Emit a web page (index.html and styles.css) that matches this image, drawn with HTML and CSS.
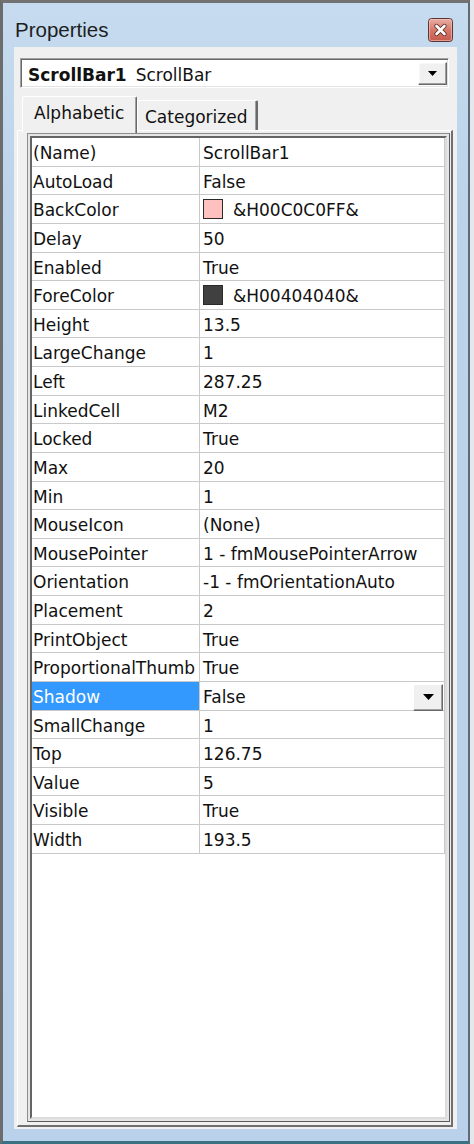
FILE: index.html
```html
<!DOCTYPE html>
<html>
<head>
<meta charset="utf-8">
<title>Properties</title>
<link rel="stylesheet" href="styles.css">
</head>
<body>
<div class="window">
  <div class="titlebar">
    <span class="title">Properties</span>
    <div class="close">
      <svg width="25" height="24" viewBox="0 0 25 24">
        <defs>
          <linearGradient id="cg" x1="0" y1="0" x2="0" y2="1">
            <stop offset="0" stop-color="#eab0a6"/>
            <stop offset="0.5" stop-color="#d7786b"/>
            <stop offset="1" stop-color="#c35a4d"/>
          </linearGradient>
        </defs>
        <rect x="0.5" y="0.5" width="24" height="23" rx="3" fill="url(#cg)" stroke="#5e3430"/>
        <rect x="1.5" y="1.5" width="22" height="21" rx="2" fill="none" stroke="#f3c8c0" stroke-opacity="0.6"/>
        <path d="M8.5 8 L16.5 16 M16.5 8 L8.5 16" stroke="#5a2d28" stroke-width="4.4" stroke-linecap="round"/>
        <path d="M8.5 8 L16.5 16 M16.5 8 L8.5 16" stroke="#ffffff" stroke-width="2.6" stroke-linecap="round"/>
      </svg>
    </div>
  </div>
  <div class="client">
    <div class="combo">
      <span class="combo-text"><b>ScrollBar1</b><span class="combo-type">ScrollBar</span></span>
      <span class="drop-btn"><svg width="9" height="5" viewBox="0 0 9 5"><polygon points="0,0 9,0 4.5,5" fill="#000"/></svg></span>
    </div>
    <div class="tabs">
      <div class="tab active">Alphabetic</div>
      <div class="tab inactive">Categorized</div>
    </div>
    <div class="page">
      <div class="grid-frame">
        <div class="grid">
          <div class="row"><div class="name">(Name)</div><div class="value">ScrollBar1</div></div>
          <div class="row"><div class="name">AutoLoad</div><div class="value">False</div></div>
          <div class="row"><div class="name">BackColor</div><div class="value"><span class="swatch swatch-pink"></span>&amp;H00C0C0FF&amp;</div></div>
          <div class="row"><div class="name">Delay</div><div class="value">50</div></div>
          <div class="row"><div class="name">Enabled</div><div class="value">True</div></div>
          <div class="row"><div class="name">ForeColor</div><div class="value"><span class="swatch swatch-dark"></span>&amp;H00404040&amp;</div></div>
          <div class="row"><div class="name">Height</div><div class="value">13.5</div></div>
          <div class="row"><div class="name">LargeChange</div><div class="value">1</div></div>
          <div class="row"><div class="name">Left</div><div class="value">287.25</div></div>
          <div class="row"><div class="name">LinkedCell</div><div class="value">M2</div></div>
          <div class="row"><div class="name">Locked</div><div class="value">True</div></div>
          <div class="row"><div class="name">Max</div><div class="value">20</div></div>
          <div class="row"><div class="name">Min</div><div class="value">1</div></div>
          <div class="row"><div class="name">MouseIcon</div><div class="value">(None)</div></div>
          <div class="row"><div class="name">MousePointer</div><div class="value">1 - fmMousePointerArrow</div></div>
          <div class="row"><div class="name">Orientation</div><div class="value">-1 - fmOrientationAuto</div></div>
          <div class="row"><div class="name">Placement</div><div class="value">2</div></div>
          <div class="row"><div class="name">PrintObject</div><div class="value">True</div></div>
          <div class="row"><div class="name">ProportionalThumb</div><div class="value">True</div></div>
          <div class="row selected"><div class="name">Shadow</div><div class="value">False<span class="cell-btn"><svg width="11" height="6" viewBox="0 0 11 6"><polygon points="0,0 11,0 5.5,6" fill="#000"/></svg></span></div></div>
          <div class="row"><div class="name">SmallChange</div><div class="value">1</div></div>
          <div class="row"><div class="name">Top</div><div class="value">126.75</div></div>
          <div class="row"><div class="name">Value</div><div class="value">5</div></div>
          <div class="row"><div class="name">Visible</div><div class="value">True</div></div>
          <div class="row"><div class="name">Width</div><div class="value">193.5</div></div>
        </div>
      </div>
    </div>
  </div>
</div>
</body>
</html>
```

FILE: styles.css
```css
html, body {
  margin: 0;
  padding: 0;
  background: #e4e8ec;
}

.window {
  width: 470px;
  height: 1144px;
  box-sizing: border-box;
  border-left: 3px solid #6c6c6c;
  border-top: 3px solid #727272;
  border-right: 2px solid #5f6b74;
  border-bottom: 3px solid #3b7283;
  background: linear-gradient(#c6dbef, #bcd3ea 200px, #b9d1ea);
  display: flex;
  flex-direction: column;
  font-family: "DejaVu Sans", sans-serif;
  font-size: 17px;
  color: #111;
}

.titlebar {
  height: 44px;
  box-sizing: border-box;
  padding: 15px 15px 0 12px;
  display: flex;
  justify-content: space-between;
  align-items: flex-start;
  flex: none;
}

.title {
  font-family: "Liberation Sans", Arial, sans-serif;
  font-size: 20.5px;
  line-height: 24px;
  color: #1e1e1e;
}

.close {
  width: 25px;
  height: 24px;
}

.close svg {
  display: block;
}

.client {
  flex: 1;
  margin: 0 11px 12px 11px;
  background: #f0f0f0;
  padding: 11px 4px 2px 3px;
  display: flex;
  flex-direction: column;
  min-height: 0;
}

.combo {
  flex: none;
  height: 30px;
  box-sizing: border-box;
  margin: 0 4px 0 3px;
  border: 1px solid;
  border-color: #a0a0a0 #ffffff #ffffff #a0a0a0;
  padding: 1px;
  background: #fff;
  box-shadow: inset 1px 1px 0 #696969, inset -1px -1px 0 #e3e3e3;
  display: flex;
  align-items: center;
}

.combo-text {
  flex: 1;
  padding-left: 6px;
  padding-top: 4px;
  white-space: nowrap;
}

.combo-text b {
  font-weight: bold;
}

.combo-type {
  margin-left: 9px;
}

.drop-btn {
  width: 29px;
  height: 23px;
  box-sizing: border-box;
  background: #f0f0f0;
  border: 1px solid;
  border-color: #ffffff #696969 #696969 #ffffff;
  box-shadow: inset -1px -1px 0 #a0a0a0, inset 1px 1px 0 #f8f8f8;
  display: flex;
  align-items: center;
  justify-content: center;
}

.drop-btn svg {
  display: block;
  margin-top: 1px;
}

.tabs {
  flex: none;
  height: 37px;
  margin-top: 8px;
  margin-bottom: -3px;
  padding-left: 5px;
  display: flex;
  align-items: flex-end;
  position: relative;
  z-index: 1;
}

.tab {
  box-sizing: border-box;
  background: #f0f0f0;
  border-top: 1px solid #ffffff;
  border-left: 1px solid #ffffff;
  border-right: 1px solid #696969;
  box-shadow: inset -1px 0 0 #a0a0a0;
  border-radius: 2px 2px 0 0;
  line-height: 20px;
  white-space: nowrap;
}

.tab.active {
  width: 115px;
  height: 37px;
  padding: 6px 0 0 11px;
}

.tab.inactive {
  width: 121px;
  height: 30px;
  margin-bottom: 3px;
  padding: 6px 0 0 7px;
  border-right-width: 2px;
}

.page {
  flex: 1;
  min-height: 0;
  display: flex;
  flex-direction: column;
  background: #f0f0f0;
  border-top: 1px solid #ffffff;
  border-left: 1px solid #ffffff;
  border-right: 2px solid #6f6f6f;
  border-bottom: 2px solid #6f6f6f;
  padding: 2px 1px 3px 9px;
}

.grid-frame {
  flex: 1;
  min-height: 0;
  display: flex;
  flex-direction: column;
  border: 1px solid;
  border-color: #8c8c8c #5c5c5c #5c5c5c #8c8c8c;
  padding: 2px;
  background: #e6e6e6;
}

.grid {
  flex: 1;
  min-height: 0;
  background: #ffffff;
  border: 2px solid;
  border-color: #646464 #dcdcdc #dcdcdc #646464;
  overflow: hidden;
}

.row {
  height: 28.64px;
  box-sizing: border-box;
  border-bottom: 1px solid #c9c9c9;
  display: flex;
}

.name,
.value {
  box-sizing: border-box;
  height: 100%;
  padding-top: 4px;
  line-height: 23.6px;
  white-space: nowrap;
  display: flex;
  align-items: center;
}

.name {
  width: 168px;
  flex: none;
  padding-left: 1px;
  border-right: 1px solid #c9c9c9;
}

.value {
  flex: 1;
  padding-left: 3px;
  border-right: 1px solid #c9c9c9;
}

.swatch {
  width: 20px;
  height: 20px;
  box-sizing: border-box;
  border: 1px solid #2a2a2a;
  margin-right: 10px;
  margin-top: -4px;
  flex: none;
}

.swatch-pink {
  background: #ffc0c0;
}

.swatch-dark {
  background: #404040;
}

.row.selected .name {
  background: #3399ff;
  color: #ffffff;
}

.cell-btn {
  margin-left: auto;
  margin-right: 1px;
  align-self: flex-start;
  margin-top: -2px;
  width: 30px;
  height: 27px;
  box-sizing: border-box;
  background: #f0f0f0;
  border: 1px solid;
  border-color: #ffffff #696969 #696969 #ffffff;
  box-shadow: inset -1px -1px 0 #a0a0a0;
  display: flex;
  align-items: center;
  justify-content: center;
}

.cell-btn svg {
  display: block;
}
```
